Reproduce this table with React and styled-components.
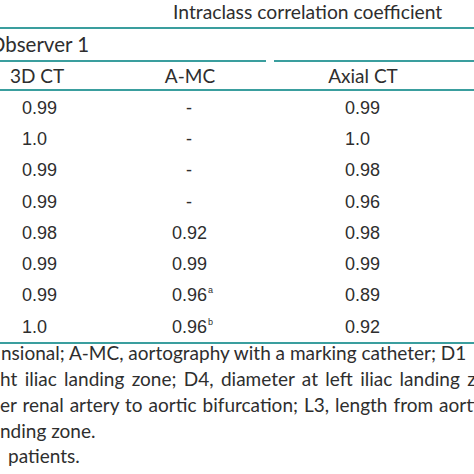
import React from "react";
import styled, { createGlobalStyle } from "styled-components";

const Global = createGlobalStyle`
  html, body { margin: 0; padding: 0; background: #fff; }
  body { width: 474px; height: 474px; overflow: hidden; }
`;

const TEAL = "#3a9e9e";
const INK = "#2e2e2e";
const HEAD_FONT = `Lato, "Open Sans", sans-serif`;
const NUM_FONT = `"Liberation Sans", Arial, sans-serif`;
const COLS = "154px 152px 8px 178px";

const Wrap = styled.div`
  margin-left: -40px;
  width: 620px;
  color: ${INK};
`;

const TitleRow = styled.div`
  height: 27px;
  border-bottom: 2px solid ${TEAL};
  padding-left: 213px;
  font-family: ${HEAD_FONT};
  font-size: 19.3px;
  line-height: 24px;
  white-space: nowrap;
`;

const GroupRow = styled.div`
  display: grid;
  grid-template-columns: 306px 8px 1fr;
  height: 32px;
`;

const GroupCell = styled.div`
  border-bottom: ${(p) => (p.$gap ? "none" : `2px solid ${TEAL}`)};
  padding-left: ${(p) => p.$indent || 0}px;
  font-family: ${HEAD_FONT};
  font-size: 20.5px;
  line-height: 31px;
  white-space: nowrap;
`;

const ColRow = styled.div`
  display: grid;
  grid-template-columns: ${COLS};
  height: 28px;
  border-bottom: 2px solid ${TEAL};
`;

const ColHead = styled.div`
  font-family: ${HEAD_FONT};
  font-size: 19px;
  line-height: 29px;
  text-align: center;
  white-space: nowrap;
`;

const Body = styled.div`
  border-bottom: 2px solid ${TEAL};
  padding-top: 1px;
`;

const DataRow = styled.div`
  display: grid;
  grid-template-columns: ${COLS};
  height: 31.3px;
  align-items: center;
`;

const Num = styled.div`
  font-family: ${NUM_FONT};
  font-size: 18px;
  line-height: 20px;
  padding-left: ${(p) => p.$pad}px;
  white-space: nowrap;
`;

const Sup = styled.sup`
  font-size: 9px;
  line-height: 0;
  vertical-align: 8px;
  margin-left: 1px;
`;

const Notes = styled.div`
  margin-top: -4px;
  font-family: ${HEAD_FONT};
  font-size: 19px;
  line-height: 25.75px;
  color: ${INK};
`;

const NoteLine = styled.div`
  width: ${(p) => p.$w}px;
  margin-left: ${(p) => p.$indent || 0}px;
  white-space: ${(p) => (p.$justify ? "normal" : "nowrap")};
  text-align: ${(p) => (p.$justify ? "justify" : "left")};
  text-align-last: ${(p) => (p.$justify ? "justify" : "left")};
`;

const rows = [
  ["0.99", "-", "0.99"],
  ["1.0", "-", "1.0"],
  ["0.99", "-", "0.98"],
  ["0.99", "-", "0.96"],
  ["0.98", "0.92", "0.98"],
  ["0.99", "0.99", "0.99"],
  ["0.99", "0.96", "0.89", "a"],
  ["1.0", "0.96", "0.92", "b"],
];

export default function App() {
  return (
    <>
      <Global />
      <Wrap>
        <TitleRow>Intraclass correlation coefficient</TitleRow>
        <GroupRow>
          <GroupCell $indent={29}>Observer 1</GroupCell>
          <GroupCell $gap />
          <GroupCell />
        </GroupRow>
        <ColRow>
          <ColHead>3D CT</ColHead>
          <ColHead>A-MC</ColHead>
          <div />
          <ColHead>Axial CT</ColHead>
        </ColRow>
        <Body>
          {rows.map(([a, b, c, s], i) => (
            <DataRow key={i}>
              <Num $pad={62}>{a}</Num>
              <Num $pad={b === "-" ? 72 : 58}>
                {b}
                {s && <Sup>{s}</Sup>}
              </Num>
              <div />
              <Num $pad={71}>{c}</Num>
            </DataRow>
          ))}
        </Body>
      </Wrap>
      <Notes>
        <NoteLine $w={480} $indent={1}>
          nsional; A-MC, aortography with a marking catheter; D1
        </NoteLine>
        <NoteLine $w={507} $justify>
          ht iliac landing zone; D4, diameter at left iliac landing zone
        </NoteLine>
        <NoteLine $w={487} $justify>
          er renal artery to aortic bifurcation; L3, length from aortic
        </NoteLine>
        <NoteLine $w={300}>nding zone.</NoteLine>
        <NoteLine $w={300} $indent={8}>patients.</NoteLine>
      </Notes>
    </>
  );
}
